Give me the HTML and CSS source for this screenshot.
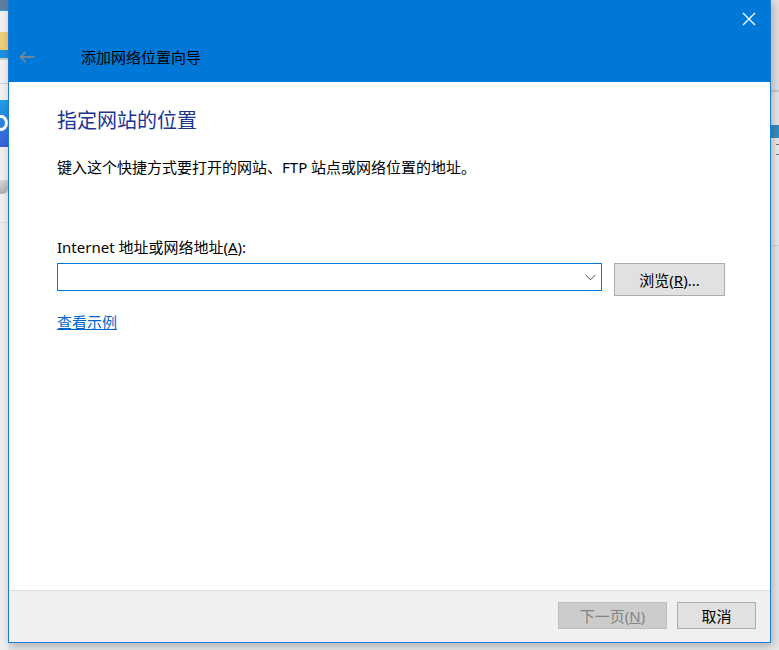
FILE: index.html
```html
<!DOCTYPE html>
<html lang="zh-CN">
<head>
    <meta charset="UTF-8">
    <meta name="viewport" content="width=device-width, initial-scale=1.0">
    <title>添加网络位置向导</title>
    <link rel="stylesheet" href="styles.css">
</head>
<body>
    <div class="desktop">

        <div class="strip strip-left">
            <div class="bl b1"></div>
            <div class="bl b2"></div>
            <div class="bl b3"></div>
            <div class="bl b4"></div>
            <div class="bl b5"></div>
            <div class="bl b6"></div>
            <div class="bl b7"></div>
            <div class="bl b8"><span class="ring"></span></div>
            <div class="bl b9"></div>
            <div class="bl b10"></div>
            <div class="bl b11"></div>
        </div>

        <div class="dialog">

            <div class="titlebar">
                <div class="close-row">
                    <svg class="close" width="14" height="14" viewBox="0 0 14 14">
                        <path d="M1 1 L13 13 M13 1 L1 13" stroke="#fff" stroke-width="1.3" fill="none"/>
                    </svg>
                </div>
                <div class="title-row">
                    <svg class="back" width="16" height="12" viewBox="0 0 16 12">
                        <path d="M15.5 6 H1.5 M6.5 1 L1.5 6 L6.5 11" stroke="#8a8a8a" stroke-width="1.4" fill="none"/>
                    </svg>
                    <span class="title">添加网络位置向导</span>
                </div>
            </div>

            <div class="content">
                <h1 class="heading">指定网站的位置</h1>
                <p class="desc">键入这个快捷方式要打开的网站、FTP 站点或网络位置的地址。</p>

                <label class="label">Internet 地址或网络地址(<u>A</u>):</label>
                <div class="input-row">
                    <div class="combo">
                        <svg class="chevron" width="11" height="7" viewBox="0 0 11 7">
                            <path d="M0.5 0.8 L5.5 5.8 L10.5 0.8" stroke="#555" stroke-width="1" fill="none"/>
                        </svg>
                    </div>
                    <button class="btn browse">浏览(<u>R</u>)...</button>
                </div>

                <a class="link" href="#">查看示例</a>
            </div>

            <div class="footer">
                <button class="btn disabled">下一页(<u>N</u>)</button>
                <button class="btn cancel">取消</button>
            </div>

        </div>

        <div class="strip strip-right">
            <div class="br r1"></div>
            <div class="br r2"></div>
            <div class="br r3"></div>
            <div class="br r4"></div>
            <div class="br r5"><span class="mark"></span></div>
            <div class="br r6"></div>
        </div>

    </div>
</body>
</html>
```

FILE: styles.css
```css
body {
    margin: 0;
    background-color: #e6e6e6;
    font-family: "Noto Sans", "Noto Sans CJK SC", sans-serif;
    overflow: hidden;
}

.desktop {
    display: flex;
    width: 779px;
    height: 650px;
}

/* background strips peeking out beside the window */

.strip {
    width: 8px;
    display: flex;
    flex-direction: column;
    flex-shrink: 0;
}

.strip-left .b1 { height: 10px; background: #5d7ea3; }
.strip-left .b2 { height: 1px; background: #3b9be2; }
.strip-left .b3 { height: 21px; background: #f1f1f1; }
.strip-left .b4 { height: 18px; background: #eed07c; }
.strip-left .b5 { height: 8px; background: #1c90e2; border-bottom: 2px solid #cfcfcf; }
.strip-left .b6 { height: 23px; background: #f2f2f2; border-bottom: 1px solid #d4d4d4; }
.strip-left .b7 { height: 16px; background: #f2f2f2; }
.strip-left .b8 {
    height: 47px;
    background: linear-gradient(180deg, #1fa2ea, #3c5fd6);
    position: relative;
    overflow: hidden;
}
.strip-left .b8 .ring {
    position: absolute;
    left: -6px;
    top: 15px;
    width: 8px;
    height: 10px;
    border: 3px solid #fff;
    border-radius: 50%;
}
.strip-left .b9 { height: 33px; background: #f0f0f0; }
.strip-left .b10 {
    height: 14px;
    background: linear-gradient(160deg, #d8d8d8, #a9a9a9);
    border-radius: 0 0 6px 0;
}
.strip-left .b11 { flex: 1; background: #eeeeee; border-top: 28px solid #f0f0f0; box-shadow: inset 0 1px 0 #ddd; }

.strip-right .r1 { height: 90px; background: #e2e2e2; }
.strip-right .r2 { height: 2px; background: #cdcdcd; }
.strip-right .r3 { height: 33px; background: #e9e9e9; }
.strip-right .r4 { height: 13px; background: #3a8ec4; }
.strip-right .r5 {
    height: 107px;
    background: #ececec;
    border-bottom: 1px solid #d2d2d2;
    position: relative;
}
.strip-right .r5 .mark {
    position: absolute;
    left: 5px;
    top: 6px;
    width: 3px;
    height: 9px;
    border-top: 1px solid #8a6a6a;
    border-bottom: 1px solid #777;
}
.strip-right .r6 { flex: 1; background: #e8e8e8; }

/* the wizard window */

.dialog {
    width: 761px;
    height: 642px;
    border: 1px solid #1a7fd4;
    border-top: none;
    display: flex;
    flex-direction: column;
    background: #fff;
    box-shadow: 2px 3px 9px rgba(0, 0, 0, 0.25);
    flex-shrink: 0;
    position: relative;
    z-index: 1;
}

.titlebar {
    height: 82px;
    background-color: #0078d7;
    display: flex;
    flex-direction: column;
}

.close-row {
    display: flex;
    justify-content: flex-end;
    padding: 12px 14px 0 0;
    height: 14px;
}

.title-row {
    display: flex;
    align-items: center;
    margin-top: 21px;
    padding-left: 10px;
    height: 20px;
}

.back {
    margin-right: 46px;
}

.title {
    font-size: 15px;
    line-height: 20px;
    color: #000;
    font-family: "Noto Sans CJK SC", sans-serif;
}

.content {
    flex: 1;
    padding: 24px 0 0 48px;
    display: flex;
    flex-direction: column;
    align-items: flex-start;
}

.heading {
    margin: 0;
    font-size: 20px;
    line-height: 28px;
    font-weight: normal;
    color: #1a3690;
    font-family: "Noto Sans CJK SC", sans-serif;
}

.desc {
    margin: 23px 0 0;
    font-size: 15px;
    line-height: 20px;
    color: #000;
}

.label {
    margin-top: 60px;
    font-size: 15px;
    line-height: 20px;
    color: #000;
}

.input-row {
    margin-top: 6px;
    display: flex;
    align-items: flex-start;
    gap: 12px;
}

.combo {
    width: 543px;
    height: 26px;
    border: 1px solid #0078d7;
    display: flex;
    justify-content: flex-end;
    align-items: center;
}

.chevron {
    margin-right: 5px;
}

.btn {
    font-family: "Noto Sans", "Noto Sans CJK SC", sans-serif;
    font-size: 15px;
    color: #000;
    background-color: #e1e1e1;
    border: 1px solid #adadad;
    padding: 0;
    line-height: 20px;
}

.browse {
    width: 111px;
    height: 33px;
}

.link {
    margin-top: 16px;
    font-size: 15px;
    line-height: 20px;
    color: #0066cc;
}

.footer {
    background-color: #f0f0f0;
    border-top: 1px solid #dfdfdf;
    display: flex;
    justify-content: flex-end;
    align-items: flex-start;
    gap: 10px;
    padding: 11px 14px 0 0;
    box-sizing: border-box;
    height: 52px;
}

.footer .btn {
    height: 27px;
}

.disabled {
    width: 109px;
    background-color: #cccccc;
    border-color: #bfbfbf;
    color: #838383;
}

.cancel {
    width: 79px;
}
```
